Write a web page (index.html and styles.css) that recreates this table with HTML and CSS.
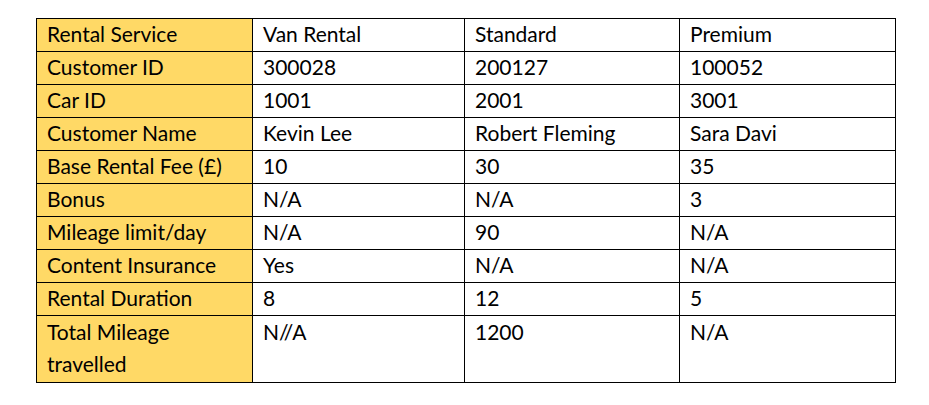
FILE: index.html
```html
<!DOCTYPE html>
<html>
<head>
<meta charset="utf-8">
<link rel="stylesheet" href="styles.css">
</head>
<body>
<table class="rental">
  <colgroup>
    <col class="c1"><col class="c2"><col class="c3"><col class="c4">
  </colgroup>
  <tr><td class="head">Rental Service</td><td>Van Rental</td><td>Standard</td><td>Premium</td></tr>
  <tr><td class="head">Customer ID</td><td>300028</td><td>200127</td><td>100052</td></tr>
  <tr><td class="head">Car ID</td><td>1001</td><td>2001</td><td>3001</td></tr>
  <tr><td class="head">Customer Name</td><td>Kevin Lee</td><td>Robert Fleming</td><td>Sara Davi</td></tr>
  <tr><td class="head">Base Rental Fee (£)</td><td>10</td><td>30</td><td>35</td></tr>
  <tr><td class="head">Bonus</td><td>N/A</td><td>N/A</td><td>3</td></tr>
  <tr><td class="head">Mileage limit/day</td><td>N/A</td><td>90</td><td>N/A</td></tr>
  <tr><td class="head">Content Insurance</td><td>Yes</td><td>N/A</td><td>N/A</td></tr>
  <tr><td class="head">Rental Duration</td><td>8</td><td>12</td><td>5</td></tr>
  <tr><td class="head">Total Mileage<br>travelled</td><td>N//A</td><td>1200</td><td>N/A</td></tr>
</table>
</body>
</html>
```
FILE: styles.css
```css
html, body {
  margin: 0;
  padding: 0;
  background: #ffffff;
}
body {
  padding: 18px 0 0 36px;
  font-family: Lato, "Liberation Sans", sans-serif;
  font-size: 21px;
  color: #000;
}
.rental {
  border-collapse: collapse;
  table-layout: fixed;
  width: 859px;
}
.c1 { width: 216px; }
.c2 { width: 212px; }
.c3 { width: 215px; }
.c4 { width: 216px; }
.rental td {
  border: 1px solid #000;
  padding: 0 10px 0;
  line-height: 32px;
  height: 32px;
  vertical-align: top;
  white-space: nowrap;
}
.rental td.head {
  background: #ffd966;
}
.rental tr:last-child td {
  line-height: 32px;
}
.rental td {
  line-height: 30px;
  padding-bottom: 2px;
  height: 30px;
}
```
